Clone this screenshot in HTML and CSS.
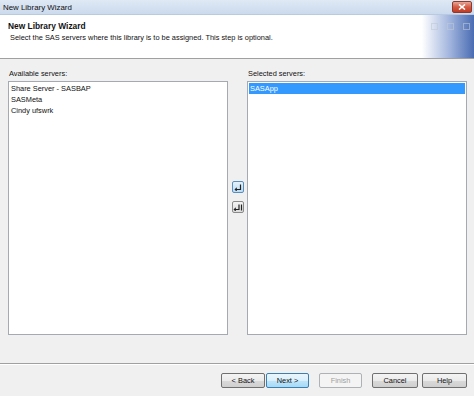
FILE: index.html
```html
<!DOCTYPE html>
<html lang="en">
<head>
  <meta charset="UTF-8">
  <meta name="viewport" content="width=device-width, initial-scale=1">
  <title>New Library Wizard</title>
  <link rel="stylesheet" href="styles.css">
</head>
<body>

  <div class="window">
    <div class="titlebar">
      <span class="title">New Library Wizard</span>
      <span class="close">
        <svg width="8" height="6" viewBox="0 0 8 6"><path d="M1 0.5 L7 5.5 M7 0.5 L1 5.5" stroke="#fff" stroke-width="1.6"/></svg>
      </span>
    </div>

    <div class="header">
      <div class="header-text">
        <h1>New Library Wizard</h1>
        <p>Select the SAS servers where this library is to be assigned. This step is optional.</p>
      </div>
      <div class="header-art">
        <span class="sq"></span><span class="sq"></span><span class="sq"></span>
      </div>
    </div>

    <div class="content">
      <div class="pane">
        <label>Available servers:</label>
        <ul class="list">
          <li>Share Server - SASBAP</li>
          <li>SASMeta</li>
          <li>Cindy ufswrk</li>
        </ul>
      </div>

      <div class="movers">
        <button class="mover active">
          <svg width="8" height="7" viewBox="0 0 8 7"><path d="M6.5 0.5 V5.5 H1.5" fill="none" stroke="#222" stroke-width="1.2"/><path d="M0.5 5.5 L2.8 3.3 V7.7 Z" fill="#222"/></svg>
        </button>
        <button class="mover">
          <svg width="10" height="7" viewBox="0 0 10 7"><path d="M6 0.5 V5.5 H1.5 M8.5 0.5 V6.5" fill="none" stroke="#222" stroke-width="1.2"/><path d="M0.5 5.5 L2.8 3.3 V7.7 Z" fill="#222"/></svg>
        </button>
      </div>

      <div class="pane">
        <label>Selected servers:</label>
        <ul class="list">
          <li class="selected">SASApp</li>
        </ul>
      </div>
    </div>

    <div class="footer">
      <button class="btn back">&lt; Back</button>
      <button class="btn next default">Next &gt;</button>
      <button class="btn finish" disabled>Finish</button>
      <button class="btn cancel">Cancel</button>
      <button class="btn help">Help</button>
    </div>
  </div>

</body>
</html>
```

FILE: styles.css
```css
body {
  margin: 0;
  padding: 0;
  font-family: 'Liberation Sans', Arial, sans-serif;
  font-size: 7.4px;
  color: #111;
  background: #f0f0f0;
}

.window {
  width: 474px;
  height: 396px;
  display: flex;
  flex-direction: column;
  overflow: hidden;
}

.titlebar {
  height: 15px;
  display: flex;
  align-items: center;
  justify-content: space-between;
  padding: 0 2px 0 3px;
  background: linear-gradient(to bottom, #dfe9f5 0%, #cbdaee 100%);
  border-bottom: 1px solid #b9c9df;
  box-sizing: border-box;
}

.title {
  font-size: 7.9px;
  color: #111;
}

.close {
  width: 18px;
  height: 10px;
  margin-top: -1px;
  display: flex;
  align-items: center;
  justify-content: center;
  background: linear-gradient(to bottom, #e9a596 0%, #d45a44 50%, #c23a22 100%);
  border: 1px solid #8d3a2e;
  border-radius: 2px;
}

.header {
  height: 44px;
  display: flex;
  background: linear-gradient(to right, #fff 0%, #fff 89%, #9fb3dc 95%, #4a6cb3 100%);
  border-bottom: 1px solid #a0a0a0;
  box-sizing: border-box;
}

.header-text {
  flex: 1;
  padding: 6px 0 0 8px;
}

.header h1 {
  margin: 0;
  font-size: 8.4px;
  font-weight: bold;
  line-height: 11px;
}

.header p {
  margin: 0 0 0 2px;
  line-height: 11px;
}

.header-art {
  display: flex;
  gap: 9px;
  padding: 8px 4px 0 0;
}

.sq {
  width: 5px;
  height: 5px;
  border: 1px solid rgba(190, 200, 215, 0.6);
}

.content {
  flex: 1;
  display: flex;
  padding: 9px 7px 28px 8px;
  border-bottom: 1px solid #a0a0a0;
  box-shadow: 0 1px 0 #fff;
}

.pane {
  width: 220px;
  display: flex;
  flex-direction: column;
}

.pane label {
  line-height: 11px;
  padding: 0 0 2px 1px;
}

.list {
  flex: 1;
  list-style: none;
  margin: 0;
  padding: 1px;
  background: #fff;
  border: 1px solid #a5a9b0;
}

.list li {
  line-height: 11px;
  padding-left: 1px;
}

.list li.selected {
  background: #3399ff;
  color: #fff;
}

.movers {
  width: 19px;
  display: flex;
  flex-direction: column;
  align-items: center;
  gap: 8px;
  padding-top: 113px;
}

.mover {
  width: 12px;
  height: 12px;
  padding: 0;
  display: flex;
  align-items: center;
  justify-content: center;
  background: linear-gradient(to bottom, #f3f3f3, #dcdcdc);
  border: 1px solid #8a8a8a;
  border-radius: 2px;
}

.mover.active {
  background: linear-gradient(to bottom, #e3f1fb, #bcdcf3);
  border-color: #5a8fbd;
}

.footer {
  height: 32px;
  display: flex;
  align-items: flex-start;
  justify-content: flex-end;
  padding: 9px 7px 0 0;
  box-sizing: border-box;
}

.btn {
  height: 15px;
  padding: 0;
  font-family: 'Liberation Sans', Arial, sans-serif;
  font-size: 7.4px;
  color: #111;
  background: linear-gradient(to bottom, #f4f4f4 0%, #ebebeb 50%, #dadada 51%, #cfcfcf 100%);
  border: 1px solid #707070;
  border-radius: 2px;
}

.btn.back { width: 44px; }
.btn.next { width: 43px; margin-left: 1px; }
.btn.finish { width: 43px; margin-left: 10px; }
.btn.cancel { width: 46px; margin-left: 10px; }
.btn.help { width: 45px; margin-left: 4px; }

.btn.default {
  background: linear-gradient(to bottom, #eaf6fd 0%, #d9f0fc 50%, #bee6fd 51%, #a7d9f5 100%);
  border-color: #3c7fb1;
}

.btn:disabled {
  color: #a0a0a0;
  background: #f4f4f4;
  border-color: #adb2b5;
}
```
